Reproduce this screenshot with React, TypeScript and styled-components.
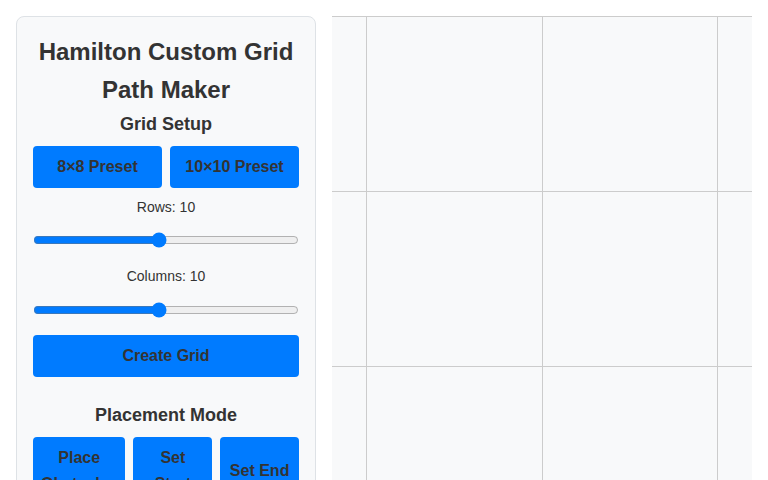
import React, { useState } from "react";
import styled, { createGlobalStyle } from "styled-components";

const Global = createGlobalStyle`
  html, body { margin: 0; padding: 0; }
  body {
    font-family: "Liberation Sans", Arial, Helvetica, sans-serif;
    line-height: 1.6;
    color: #333;
    background: #fff;
    overflow: hidden;
  }
  * { box-sizing: border-box; }
`;

const Page = styled.div`
  display: flex;
  align-items: flex-start;
  gap: 16px;
  padding: 16px;
  height: 480px;
`;

const Panel = styled.aside`
  flex: 0 0 300px;
  background: #f8f9fa;
  border: 1px solid #dee2e6;
  border-radius: 8px;
  padding: 16px;
  text-align: center;
  min-height: 600px;
`;

const Title = styled.h1`
  font-size: 24px;
  font-weight: bold;
  margin: 0;
  line-height: 1.6;
`;

const Heading = styled.h2<{ $top?: number }>`
  font-size: 18px;
  font-weight: bold;
  margin: ${(p) => p.$top ?? 0}px 0 7px;
  line-height: 1.6;
`;

const Row = styled.div`
  display: flex;
  gap: 8px;
`;

const Button = styled.button`
  flex: 1 1 0;
  background: #007bff;
  color: #333;
  border: none;
  border-radius: 4px;
  padding: 8px;
  font-family: inherit;
  font-size: 16px;
  font-weight: bold;
  line-height: 26px;
  cursor: pointer;
`;

const WideButton = styled(Button)`
  display: block;
  width: 100%;
  margin-top: 17px;
`;

const Field = styled.div`
  margin-top: 8px;
  & + & { margin-top: 17.5px; }
`;

const Label = styled.label`
  display: block;
  font-size: 14px;
  line-height: 1.6;
`;

const Range = styled.input`
  display: block;
  width: 100%;
  margin: 14px 0 0;
  height: 16px;
  accent-color: #007bff;
`;

const Viewport = styled.div`
  flex: 1 1 auto;
  height: 464px;
  overflow: hidden;
  display: flex;
  justify-content: center;
`;

const Grid = styled.div<{ $cols: number }>`
  flex: 0 0 auto;
  display: grid;
  grid-template-columns: repeat(${(p) => p.$cols}, 175.5px);
  grid-auto-rows: 175px;
  background: #f8f9fa;
  border-top: 1px solid #ccc;
  border-left: 1px solid #ccc;
`;

const Cell = styled.div`
  background: #f8f9fa;
  border-right: 1px solid #ccc;
  border-bottom: 1px solid #ccc;
`;

export default function App() {
  const [rows, setRows] = useState(10);
  const [cols, setCols] = useState(10);
  const cells = Array.from({ length: rows * cols });
  return (
    <>
      <Global />
      <Page>
        <Panel>
          <Title>Hamilton Custom Grid Path Maker</Title>
          <Heading>Grid Setup</Heading>
          <Row>
            <Button>8×8 Preset</Button>
            <Button>10×10 Preset</Button>
          </Row>
          <Field>
            <Label htmlFor="rows">Rows: {rows}</Label>
            <Range id="rows" type="range" min={1} max={20} value={rows} onChange={(e) => setRows(+e.target.value)} />
          </Field>
          <Field>
            <Label htmlFor="cols">Columns: {cols}</Label>
            <Range id="cols" type="range" min={1} max={20} value={cols} onChange={(e) => setCols(+e.target.value)} />
          </Field>
          <WideButton>Create Grid</WideButton>
          <Heading $top={24.5}>Placement Mode</Heading>
          <Row>
            <Button>Place Obstacles</Button>
            <Button>Set Start</Button>
            <Button>Set End</Button>
          </Row>
        </Panel>
        <Viewport>
          <Grid $cols={cols}>
            {cells.map((_, i) => (
              <Cell key={i} />
            ))}
          </Grid>
        </Viewport>
      </Page>
    </>
  );
}
